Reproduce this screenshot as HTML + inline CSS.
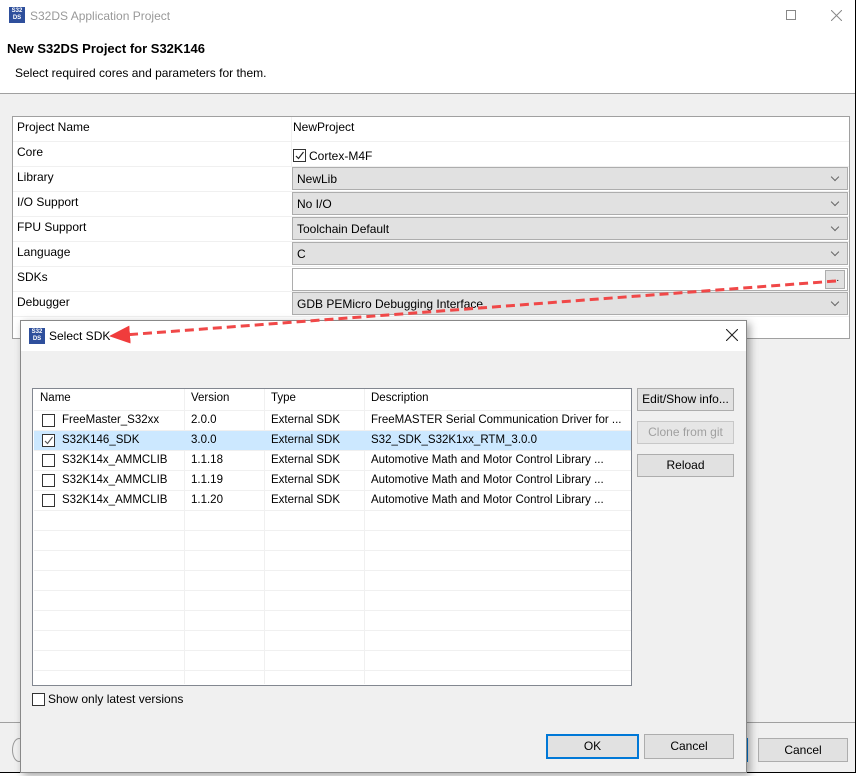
<!DOCTYPE html>
<html><head><meta charset="utf-8">
<style>
*{box-sizing:border-box;margin:0;padding:0}
body{width:861px;height:776px;background:#fff;font-family:"Liberation Sans",sans-serif;font-size:12px;color:#000;position:relative;overflow:hidden}
.abs{position:absolute;white-space:nowrap}
.logo{position:absolute;width:16px;height:16px;background:#2e4f9c;color:#fff;font-size:6px;line-height:7px;text-align:center;font-weight:bold;padding-top:1px}
.dd{position:absolute;left:292px;width:556px;height:23px;background:#e1e1e1;border:1px solid #adadad;padding:4px 0 0 4px}
.dd:after{content:"";position:absolute;right:9px;top:6px;width:5px;height:5px;border-right:1px solid #666;border-bottom:1px solid #666;transform:rotate(45deg)}
.cb{position:absolute;width:13px;height:13px;border:1px solid #333;background:#fff}
.btn{position:absolute;background:#e1e1e1;border:1px solid #adadad;text-align:center}
.row{position:absolute;left:1px;width:597px;height:20px;border-bottom:1px solid #f0f0f0;font-size:11.5px}
.row span{position:absolute;top:3px;white-space:nowrap}
.vl{position:absolute;top:0;width:1px;height:295px;background:#f0f0f0}
</style></head><body>
<div class="abs" style="left:0;top:0;width:856px;height:773px;border-right:1px solid #000;border-bottom:1px solid #000;background:#f0f0f0">
  <div class="abs" style="left:0;top:0;width:855px;height:94px;background:#fff;border-bottom:1px solid #a0a0a0"></div>
  <div class="logo" style="left:9px;top:7px">S32<br>DS</div>
  <div class="abs" style="left:30px;top:9px;color:#999;font-size:12px">S32DS Application Project</div>
  <div class="abs" style="left:786px;top:10px;width:10px;height:10px;border:1px solid #888"></div>
  <svg class="abs" style="left:831px;top:10px" width="11" height="11"><path d="M0,0L11,11M11,0L0,11" stroke="#888" stroke-width="1"/></svg>
  <div class="abs" style="left:7px;top:41px;font-weight:bold;font-size:13px">New S32DS Project for S32K146</div>
  <div class="abs" style="left:15px;top:66px">Select required cores and parameters for them.</div>
  <div class="abs" style="left:12px;top:116px;width:838px;height:223px;background:#fff;border:1px solid #a0a0a0">
    <div class="abs" style="left:4px;top:3px">Project Name</div><div class="abs" style="left:280px;top:3px">NewProject</div>
    <div class="abs" style="left:4px;top:28px">Core</div>
    <div class="cb" style="left:280px;top:32px"></div>
    <svg class="abs" style="left:281px;top:33px" width="11" height="11"><path d="M2,6L4.5,8.5L9.5,2" stroke="#222" stroke-width="1.2" fill="none"/></svg>
    <div class="abs" style="left:296px;top:32px">Cortex-M4F</div>
    <div class="abs" style="left:4px;top:53px">Library</div>
    <div class="abs" style="left:4px;top:78px">I/O Support</div>
    <div class="abs" style="left:4px;top:103px">FPU Support</div>
    <div class="abs" style="left:4px;top:128px">Language</div>
    <div class="abs" style="left:4px;top:153px">SDKs</div>
    <div class="abs" style="left:4px;top:178px">Debugger</div>
    <div class="abs" style="left:0;top:24px;width:836px;height:1px;background:#f0f0f0"></div>
    <div class="abs" style="left:0;top:49px;width:836px;height:1px;background:#f0f0f0"></div>
    <div class="abs" style="left:0;top:74px;width:836px;height:1px;background:#f0f0f0"></div>
    <div class="abs" style="left:0;top:99px;width:836px;height:1px;background:#f0f0f0"></div>
    <div class="abs" style="left:0;top:124px;width:836px;height:1px;background:#f0f0f0"></div>
    <div class="abs" style="left:0;top:149px;width:836px;height:1px;background:#f0f0f0"></div>
    <div class="abs" style="left:0;top:174px;width:836px;height:1px;background:#f0f0f0"></div>
    <div class="abs" style="left:0;top:199px;width:836px;height:1px;background:#f0f0f0"></div>
    <div class="abs" style="left:278px;top:0;width:1px;height:50px;background:#f0f0f0"></div>
  </div>
  <div class="dd" style="top:167px">NewLib</div>
  <div class="dd" style="top:192px">No I/O</div>
  <div class="dd" style="top:217px">Toolchain Default</div>
  <div class="dd" style="top:242px">C</div>
  <div class="abs" style="left:292px;top:268px;width:556px;height:23px;background:#fff;border:1px solid #adadad"></div>
  <div class="btn" style="left:825px;top:270px;width:20px;height:19px;font-size:10px;line-height:16px">...</div>
  <div class="dd" style="top:292px">GDB PEMicro Debugging Interface</div>
  <div class="abs" style="left:0;top:722px;width:855px;height:1px;background:#a0a0a0"></div>
  <div class="abs" style="left:12px;top:738px;width:14px;height:24px;border:1px solid #999;border-radius:50%"></div>
  <div class="btn" style="left:700px;top:738px;width:48px;height:24px;border:2px solid #0078d7"></div>
  <div class="btn" style="left:758px;top:738px;width:90px;height:24px;line-height:22px">Cancel</div>
</div>

<div class="abs" style="left:20px;top:320px;width:727px;height:453px;background:#f0f0f0;border:1px solid #888;box-shadow:3px 3px 8px rgba(0,0,0,.35)">
  <div class="abs" style="left:0;top:0;width:725px;height:30px;background:#fff"></div>
  <div class="logo" style="left:8px;top:7px">S32<br>DS</div>
  <div class="abs" style="left:28px;top:8px">Select SDK</div>
  <svg class="abs" style="left:705px;top:8px" width="12" height="12"><path d="M0,0L12,12M12,0L0,12" stroke="#222" stroke-width="1.1"/></svg>
  <div class="abs" style="left:11px;top:67px;width:600px;height:298px;background:#fff;border:1px solid #828790">
    <div class="vl" style="left:151px"></div><div class="vl" style="left:231px"></div><div class="vl" style="left:331px"></div>
    <div class="row" style="top:0;height:22px"><span style="left:6px">Name</span><span style="left:157px">Version</span><span style="left:237px">Type</span><span style="left:337px">Description</span></div>
    <div class="row" style="top:22px"><div class="cb" style="left:8px;top:3px"></div><span style="left:28px">FreeMaster_S32xx</span><span style="left:157px">2.0.0</span><span style="left:237px">External SDK</span><span style="left:337px">FreeMASTER Serial Communication Driver for ...</span></div>
    <div class="row" style="top:42px;background:#cce8ff"><div class="cb" style="left:8px;top:3px"></div><svg style="position:absolute;left:9px;top:4px" width="11" height="11"><path d="M2,6L4.5,8.5L9.5,2" stroke="#555" stroke-width="1.1" fill="none"/></svg><span style="left:28px">S32K146_SDK</span><span style="left:157px">3.0.0</span><span style="left:237px">External SDK</span><span style="left:337px">S32_SDK_S32K1xx_RTM_3.0.0</span></div>
    <div class="row" style="top:62px"><div class="cb" style="left:8px;top:3px"></div><span style="left:28px">S32K14x_AMMCLIB</span><span style="left:157px">1.1.18</span><span style="left:237px">External SDK</span><span style="left:337px">Automotive Math and Motor Control Library ...</span></div>
    <div class="row" style="top:82px"><div class="cb" style="left:8px;top:3px"></div><span style="left:28px">S32K14x_AMMCLIB</span><span style="left:157px">1.1.19</span><span style="left:237px">External SDK</span><span style="left:337px">Automotive Math and Motor Control Library ...</span></div>
    <div class="row" style="top:102px"><div class="cb" style="left:8px;top:3px"></div><span style="left:28px">S32K14x_AMMCLIB</span><span style="left:157px">1.1.20</span><span style="left:237px">External SDK</span><span style="left:337px">Automotive Math and Motor Control Library ...</span></div>
    <div class="row" style="top:122px"></div><div class="row" style="top:142px"></div><div class="row" style="top:162px"></div><div class="row" style="top:182px"></div><div class="row" style="top:202px"></div><div class="row" style="top:222px"></div><div class="row" style="top:242px"></div><div class="row" style="top:262px"></div>
  </div>
  <div class="btn" style="left:616px;top:67px;width:97px;height:23px;line-height:21px">Edit/Show info...</div>
  <div class="btn" style="left:616px;top:100px;width:97px;height:23px;line-height:21px;color:#a0a0a0;background:#e6e6e6;border-color:#c8c8c8">Clone from git</div>
  <div class="btn" style="left:616px;top:133px;width:97px;height:23px;line-height:21px">Reload</div>
  <div class="cb" style="left:11px;top:372px"></div>
  <div class="abs" style="left:27px;top:371px">Show only latest versions</div>
  <div class="btn" style="left:525px;top:413px;width:93px;height:25px;line-height:21px;border:2px solid #0078d7">OK</div>
  <div class="btn" style="left:623px;top:413px;width:90px;height:25px;line-height:23px">Cancel</div>
</div>

<svg class="abs" style="left:0;top:0" width="861" height="776">
  <defs><marker id="ah" markerWidth="8" markerHeight="8" refX="2" refY="4" orient="auto"><path d="M0,1 L7,4 L0,7 Z" fill="#f03c3c"/></marker></defs>
  <line x1="836" y1="281" x2="124" y2="335" stroke="#f04848" stroke-width="3" stroke-dasharray="9,5" marker-end="url(#ah)"/>
</svg>
</body></html>
